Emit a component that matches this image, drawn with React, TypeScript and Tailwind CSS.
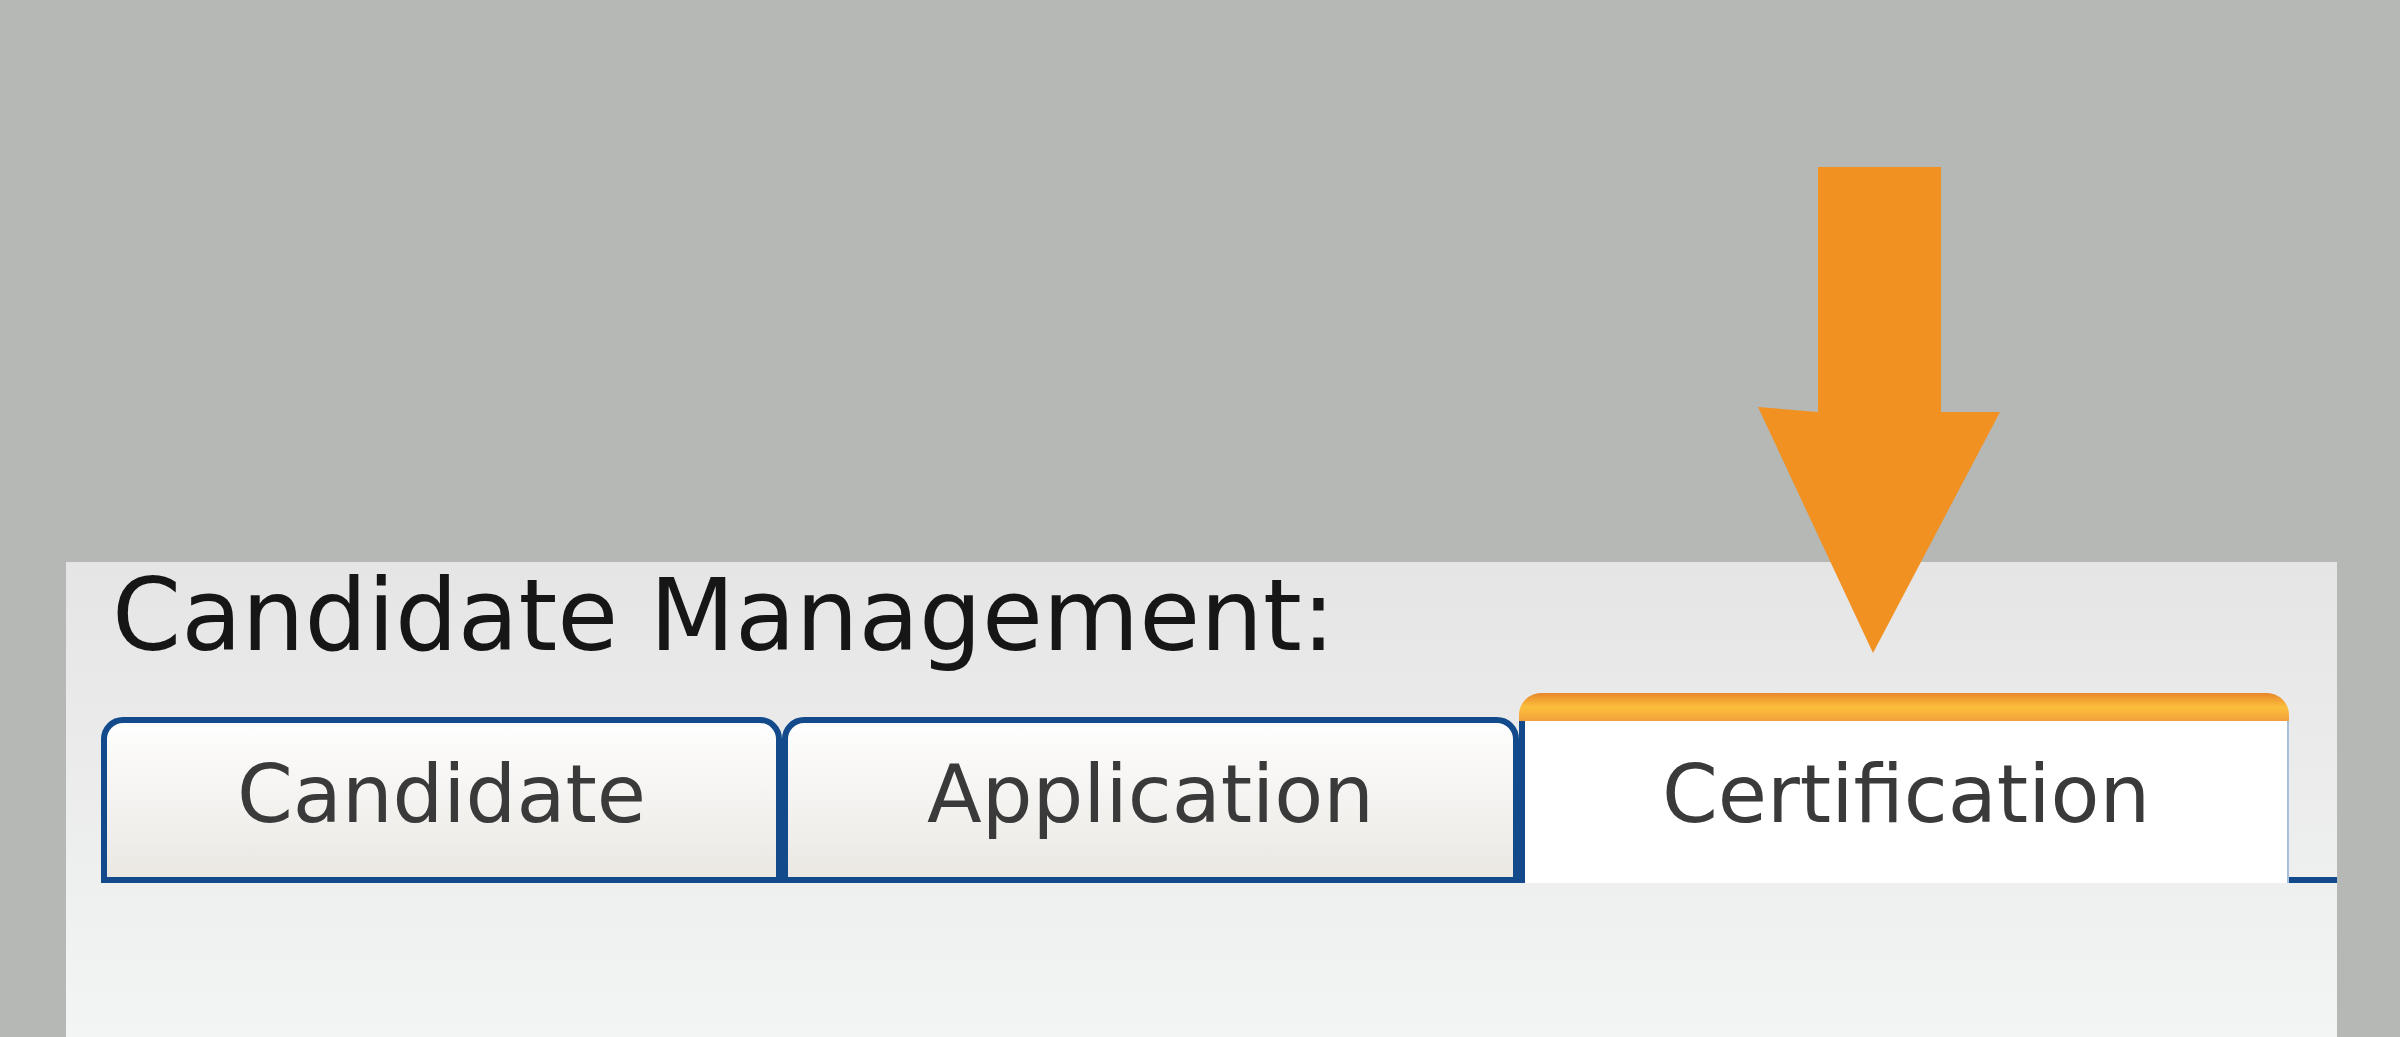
export default function App() {
  return (
    <div
      className="relative h-[1037px] w-full overflow-hidden bg-[#b6b8b6]"
      style={{ fontFamily: "'DejaVu Sans', Verdana, sans-serif" }}
    >
      <div className="ml-[66px] mt-[562px] flex h-[475px] w-[2271px] flex-col bg-gradient-to-b from-[#e5e5e5] to-[#f3f4f4]">
        <h1 className="pl-[46px] pt-[4px] text-[99px] font-normal leading-none text-[#161616]">
          Candidate Management:
        </h1>

        <div className="ml-[35px] mt-[28px] flex items-end">
          <div className="flex h-[166px] w-[681px] justify-center rounded-t-[22px] border-[6px] border-[#124a8b] bg-gradient-to-b from-[#fefefe] to-[#ebe8e3] pt-[32px] text-[80px] leading-none text-[#3a3a3a]">
            Candidate
          </div>
          <div className="flex h-[166px] w-[737px] justify-center rounded-t-[22px] border-[6px] border-[#124a8b] bg-gradient-to-b from-[#fefefe] to-[#ebe8e3] pt-[32px] text-[80px] leading-none text-[#3a3a3a]">
            Application
          </div>
          <div className="flex h-[190px] w-[770px] flex-col">
            <div className="h-[28px] rounded-t-[22px] bg-gradient-to-b from-[#e8862a] via-[#fbbf3c] to-[#f3a03a]" />
            <div className="flex flex-1 justify-center border-l-[6px] border-r-[2px] border-l-[#124a8b] border-r-[#a8c0da] bg-white pt-[34px] text-[80px] leading-none text-[#3a3a3a]">
              Certification
            </div>
          </div>
          <div className="h-[6px] flex-1 bg-[#124a8b]" />
        </div>
      </div>

      <svg
        className="absolute left-[1758px] top-[167px]"
        width="242"
        height="486"
        viewBox="0 0 242 486"
      >
        <polygon points="60,0 183,0 183,245 242,245 115,486 0,240 60,245" fill="#f19122" />
      </svg>
    </div>
  );
}
